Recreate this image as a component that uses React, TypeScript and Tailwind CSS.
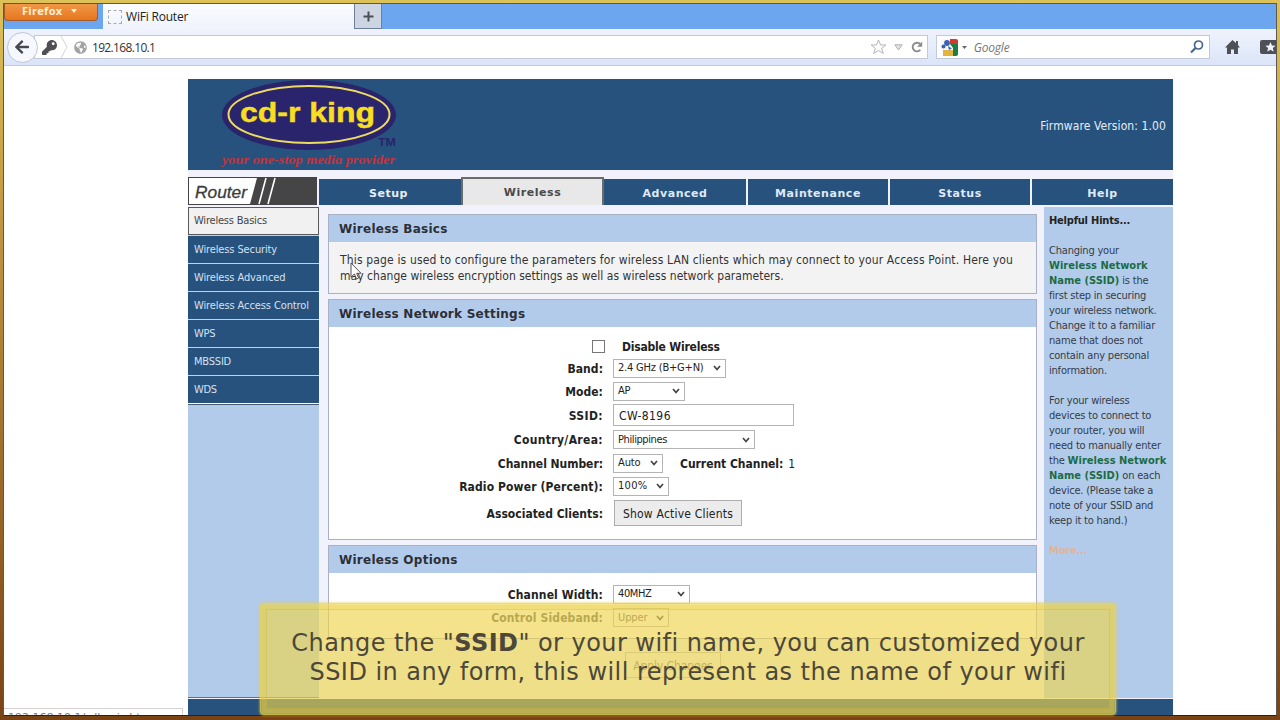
import { ReactNode } from 'react';
import { FaArrowLeft, FaKey, FaGlobeAmericas } from 'react-icons/fa';

interface NavItem {
  name: string;
  className: string;
}

const navItems: NavItem[] = [
  { name: 'Setup', className: 'w-[142px] pr-[3px] text-[#e8eef8]' },
  { name: 'Wireless', className: 'w-[143px] text-[#4a4a4a]' },
  { name: 'Advanced', className: 'w-[142px] text-[#dfe9f7]' },
  { name: 'Maintenance', className: 'w-[140px] ml-[2px] text-[#dfe9f7]' },
  { name: 'Status', className: 'w-[140px] ml-[2px] text-[#dfe9f7]' },
  { name: 'Help', className: 'w-[141px] ml-[2px] text-[#dfe9f7]' },
];

const sideItems: NavItem[] = [
  { name: 'Wireless Security', className: 'tracking-[-0.12px]' },
  { name: 'Wireless Advanced', className: 'tracking-[-0.12px]' },
  { name: 'Wireless Access Control', className: 'tracking-[-0.1px]' },
  { name: 'WPS', className: 'tracking-[-0.25px]' },
  { name: 'MBSSID', className: 'tracking-[-0.2px]' },
  { name: 'WDS', className: 'tracking-[-0.35px]' },
];

function Browser() {
  return (
    <div className="shrink-0 font-['Open_Sans','Noto_Sans',sans-serif]">
      <div className="h-[25px] flex bg-[#6ba6ee]">
        <div className="w-[94px] h-[17px] pl-[17px] pb-[2px] flex items-center gap-[9px] rounded-b-[4px] border border-t-0 border-[#a35a2c] bg-linear-to-b from-[#ef9746] to-[#e8761a] text-[11px] font-bold text-[#fff1dc]">
          <span className="tracking-[0.3px]">Firefox</span>
          <svg width="6" height="4" viewBox="0 0 6 4">
            <path d="M0 0h6L3 4z" fill="#fff1dc" />
          </svg>
        </div>
        <div className="ml-[5px] w-[251px] h-[25px] pl-[5px] flex items-center gap-[4px] bg-linear-to-b from-[#fbfcff] to-[#f0f3fd] text-[12px] text-[#222]">
          <span className="w-[14px] h-[14px] border border-dashed border-[#aaa]" />
          <span className="tracking-[-0.2px]">WiFi Router</span>
        </div>
        <div className="w-[28px] h-[25px] flex items-center justify-center border border-t-0 border-[#6d7f9c] bg-[#cdd5e2]">
          <svg width="11" height="11" viewBox="0 0 11 11">
            <path d="M5.5 0.5v10M0.5 5.5h10" stroke="#4b4f57" strokeWidth="2" />
          </svg>
        </div>
      </div>
      <div className="h-[37px] flex items-center bg-linear-to-b from-[#f0f3fd] to-[#dbe5f8] border-b border-[#c3cbdc]">
        <div className="ml-[3px] w-[31px] h-[31px] z-10 flex items-center justify-center rounded-full border border-[#bcc5da] bg-[#f6f8fe]">
          <FaArrowLeft className="text-[16px] text-[#45484f]" />
        </div>
        <div className="-ml-[4px] w-[896px] h-[24px] flex items-center bg-white border border-[#c2c9d8] text-[12px] text-[#333]">
          <FaKey className="ml-[7px] text-[15px] text-[#4e5055]" />
          <svg className="ml-[3px]" width="8" height="22" viewBox="0 0 8 22">
            <path d="M1 0l6 11-6 11" fill="none" stroke="#d2d5dc" />
          </svg>
          <FaGlobeAmericas className="ml-[6px] text-[13px] text-[#a3a3a3]" />
          <span className="ml-[5px] pt-px tracking-[-0.65px]">192.168.10.1</span>
          <svg className="ml-auto" width="17" height="16" viewBox="0 0 17 16">
            <path d="M8.5 1l2.1 5h5.2l-4.1 3.4 1.6 5.1-4.8-3-4.8 3 1.6-5.1L1.200 6h5.200z" fill="#fcfcfc" stroke="#b5b5b5" />
          </svg>
          <svg className="ml-[7px]" width="9" height="7" viewBox="0 0 9 7">
            <path d="M.8.8h7.400L4.500 6z" fill="#e4e4e4" stroke="#b0b0b0" />
          </svg>
          <svg className="ml-[8px] mr-[4px]" width="12" height="12" viewBox="0 0 12 12">
            <path d="M9.300 8.800A4.300 4.300 0 1 1 9.200 3.200" fill="none" stroke="#8c8c8c" strokeWidth="1.900" />
            <path d="M11.200.5v5.300H6z" fill="#8c8c8c" />
          </svg>
        </div>
        <div className="ml-[8px] w-[275px] h-[24px] pl-[4px] pr-[5px] flex items-center bg-white border border-[#c2c9d8]">
          <svg width="17" height="17" viewBox="0 0 17 17">
            <path d="M9 0h6q2 0 2 2v3H9z" fill="#d2392f" />
            <path d="M9 5h8v10q0 2-2 2h-3V9z" fill="#1b7f43" />
            <path d="M0 2q0-2 2-2h7v11H2q-2 0-2-2z" fill="#f5f8ff" />
            <path d="M2 11h10v6H2z" fill="#e3b341" />
            <circle cx="6" cy="4" r="2.900" fill="#3a63b8" />
            <circle cx="2.500" cy="7.500" r="2" fill="#3a63b8" />
            <path d="M7 7l4 2.500-3 1.500z" fill="#3a63b8" />
          </svg>
          <svg className="ml-[4px]" width="5" height="3" viewBox="0 0 5 3">
            <path d="M0 0h5L2.500 3z" fill="#666" />
          </svg>
          <span className="ml-[7px] pt-px text-[12px] italic tracking-[-0.2px] text-[#777]">Google</span>
          <svg className="ml-auto" width="14" height="14" viewBox="0 0 14 14">
            <circle cx="8.500" cy="5" r="4" fill="none" stroke="#44658d" strokeWidth="1.700" />
            <path d="M5.500 8L1 12.500" stroke="#44658d" strokeWidth="2.200" />
          </svg>
        </div>
        <svg className="ml-[15px]" width="15" height="14" viewBox="0 0 15 14">
          <path d="M7.500 0L11 3V1h2v4l2 2.500h-2V14H9V9.500H6V14H2V7.500H0z" fill="#4d5057" />
        </svg>
        <svg className="ml-[20px]" width="16" height="14" viewBox="0 0 16 14">
          <rect width="20" height="14" rx="2" fill="#4d5057" />
          <path d="M10.500 2l1.500 3.400 3.600.3-2.700 2.400.8 3.600-3.200-1.900-3.200 1.900.8-3.600-2.700-2.400 3.600-.3z" fill="#eef2fb" />
        </svg>
      </div>
    </div>
  );
}

function Header() {
  return (
    <div className="h-[91px] pr-[7px] flex items-center justify-between bg-[#27527d] text-[12px] text-[#e6edf6]">
      <svg width="230" height="91" viewBox="0 0 230 91">
        <ellipse cx="121" cy="36" rx="87" ry="35" fill="#29246b" />
        <ellipse cx="121" cy="35.500" rx="80.500" ry="28.500" fill="none" stroke="#eedb62" strokeWidth="2" />
        <text
          x="52"
          y="43"
          textLength="135"
          lengthAdjust="spacingAndGlyphs"
          fontSize="28"
          fontWeight="bold"
          fill="#f7de1e"
          stroke="#f7de1e"
          strokeWidth=".5"
          className="font-['Liberation_Sans',Arial,sans-serif]"
        >
          cd-r king
        </text>
        <text
          x="190"
          y="67"
          textLength="18"
          lengthAdjust="spacingAndGlyphs"
          fontSize="10"
          fontWeight="bold"
          fill="#29246b"
          className="font-['Liberation_Sans',Arial,sans-serif]"
        >
          TM
        </text>
        <text
          x="34"
          y="85"
          textLength="173"
          lengthAdjust="spacingAndGlyphs"
          fontSize="12"
          fontWeight="bold"
          fontStyle="italic"
          fill="#c8323c"
          className="font-['Liberation_Serif',serif]"
        >
          your one-stop media provider
        </text>
      </svg>
      <span className="pt-[2px] font-['DejaVu_Sans_Condensed','DejaVu_Sans',sans-serif] tracking-[0.1px]">Firmware Version: 1.00</span>
    </div>
  );
}

function Nav() {
  return (
    <nav className="h-[28px] flex items-end">
      <svg className="mr-[2px]" width="129" height="28" viewBox="0 0 129 28">
        <rect x=".5" y=".5" width="128" height="27" fill="#fff" stroke="#444" />
        <path d="M69 1h59v26H62z" fill="#454545" />
        <path d="M78 1l-7 26M87 1l-7 26" stroke="#fff" strokeWidth="1.600" />
        <text
          x="7"
          y="21"
          textLength="52"
          lengthAdjust="spacingAndGlyphs"
          fontSize="17"
          fontStyle="italic"
          fill="#3c3c3c"
          stroke="#3c3c3c"
          strokeWidth=".3"
          className="font-['Liberation_Sans',Arial,sans-serif]"
        >
          Router
        </text>
      </svg>
      {navItems.map(({ name, className }) => (
        <div
          key={name}
          className={`${className} flex items-center justify-center text-[11px] font-bold tracking-[0.55px] ${
            name === 'Wireless' ? 'h-[28px] pt-[2px] bg-[#e8e8e8] border-2 border-b-0 border-[#6c6c6c]' : 'h-[26px] pt-[5px]  bg-[#27527d]'
          }`}
        >
          {name}
        </div>
      ))}
    </nav>
  );
}

function Sidebar() {
  return (
    <div className="w-[131px] flex flex-col bg-[#b3cbea] border-b border-[#5b708e] font-['DejaVu_Sans_Condensed','DejaVu_Sans',sans-serif] text-[11px]">
      <div className="h-[28px] pl-[5px] pt-px flex items-center bg-[#f1f1f1] border border-[#5a5a5a] text-[#444] tracking-[-0.2px]">
        Wireless Basics
      </div>
      {sideItems.map(({ name, className }) => (
        <div
          key={name}
          className={`${className} h-[28px] pl-[6px] pt-px flex items-center bg-[#27527d] border-t border-[#c8d0dc] text-[#d3e1f3]`}
        >
          {name}
        </div>
      ))}
      <div className="h-[2px] border-t border-white bg-[#4b5c70]" />
    </div>
  );
}

function Panel({ title, className, children }: { title: string; className: string; children: ReactNode }) {
  return (
    <section className={`${className} border border-[#a9b1c6]`}>
      <h2 className="h-[27px] pl-[10px] flex items-center bg-[#b3cbea] font-['DejaVu_Sans',Verdana,sans-serif] text-[12px] font-bold tracking-[0.25px] text-[#2c2f36]">
        {title}
      </h2>
      {children}
    </section>
  );
}

function Row({ label, className, children }: { label: string; className: string; children: ReactNode }) {
  return (
    <div className={`${className} flex items-center`}>
      <span className="w-[274px] mr-[10px] pt-px text-right font-bold">{label}</span>
      {children}
    </div>
  );
}

function Select({ value, className }: { value: string; className: string }) {
  return (
    <div className={`${className} h-[19px] pl-[4px] pr-[4px] flex items-center justify-between bg-white border border-[#b4b4b4] text-[11px] whitespace-nowrap`}>
      <span className="pt-px">{value}</span>
      <svg width="8" height="6" viewBox="0 0 8 6">
        <path d="M1 1l3 3.500L7 1" fill="none" stroke="#444" strokeWidth="1.700" />
      </svg>
    </div>
  );
}

function Content() {
  return (
    <main className="w-[725px] pl-[9px] pr-[7px] pt-[7px] bg-[#f1f2fb] font-['DejaVu_Sans_Condensed','DejaVu_Sans',sans-serif] text-[12px] text-[#222]">
      <Panel title="Wireless Basics" className="h-[80px] bg-[#f3f3f4]">
        <p className="pl-[11px] pt-[10px] leading-[16px] text-[#333] whitespace-nowrap">
          <span className="tracking-[0.15px]">
            This page is used to configure the parameters for wireless LAN clients which may connect to your Access Point. Here you
          </span>
          <br />
          <span className="tracking-[0.03px]">
            may change wireless encryption settings as well as wireless network parameters.
          </span>
        </p>
      </Panel>
      <Panel title="Wireless Network Settings" className="mt-[5px] h-[241px] bg-white">
        <div className="mt-[8px] h-[22px] flex items-center">
          <span className="ml-[263px] w-[13px] h-[13px] bg-white border border-[#777]" />
          <span className="ml-[17px] pt-px font-bold tracking-[-0.2px]">Disable Wireless</span>
        </div>
        <Row label="Band:" className="h-[22px] tracking-[0.05px]">
          <Select value="2.4 GHz (B+G+N)" className="w-[113px] tracking-[-0.2px]" />
        </Row>
        <Row label="Mode:" className="h-[24px] tracking-[0.05px]">
          <Select value="AP" className="w-[72px] tracking-[-0.3px]" />
        </Row>
        <Row label="SSID:" className="h-[24px] tracking-[0.4px]">
          <div className="w-[181px] h-[22px] pl-[5px] pt-px flex items-center border border-[#b4b4b4]">CW-8196</div>
        </Row>
        <Row label="Country/Area:" className="h-[25px] tracking-[0.35px]">
          <Select value="Philippines" className="w-[142px] tracking-[-0.4px]" />
        </Row>
        <Row label="Channel Number:" className="h-[22px] tracking-[-0.03px]">
          <Select value="Auto" className="w-[50px] tracking-[-0.1px]" />
          <span className="ml-[17px] pt-px font-bold">Current Channel:</span>
          <span className="ml-[5px] pt-px">1</span>
        </Row>
        <Row label="Radio Power (Percent):" className="h-[24px] tracking-[0.12px]">
          <Select value="100%" className="w-[56px] tracking-[0.3px]" />
        </Row>
        <Row label="Associated Clients:" className="h-[30px] tracking-[0.01px]">
          <div className="ml-px w-[128px] h-[26px] pt-px flex items-center justify-center bg-[#ececec] border border-[#adadad] tracking-[0.2px]">
            Show Active Clients
          </div>
        </Row>
      </Panel>
      <Panel title="Wireless Options" className="mt-[5px] h-[94px] bg-white">
        <Row label="Channel Width:" className="mt-[9px] h-[24px] tracking-[0.12px]">
          <Select value="40MHZ" className="w-[77px] tracking-[-0.4px]" />
        </Row>
        <Row label="Control Sideband:" className="h-[23px] tracking-[0.13px] text-[#555]">
          <Select value="Upper" className="w-[56px] tracking-[-0.1px]" />
        </Row>
      </Panel>
      <div className="mt-[13px] ml-[297px] w-[96px] h-[26px] pt-px flex items-center justify-center border border-[#bbb] tracking-[-0.1px] text-[#777]">
        Apply Changes
      </div>
    </main>
  );
}

function Hints() {
  return (
    <aside className="w-[129px] pl-[5px] pt-[6px] bg-[#b3cbea] font-['DejaVu_Sans_Condensed','DejaVu_Sans',sans-serif] text-[11px] leading-[15px] tracking-[-0.2px] text-[#333c48] whitespace-nowrap [&_b]:text-[#1c6b45] [&_b]:tracking-[0.02px]">
      <h3 className="font-bold text-[#222]">Helpful Hints...</h3>
      <p className="mt-[15px]">
        Changing your
        <br />
        <b>Wireless Network</b>
        <br />
        <b>Name (SSID)</b> is the
        <br />
        first step in securing
        <br />
        your wireless network.
        <br />
        Change it to a familiar
        <br />
        name that does not
        <br />
        contain any personal
        <br />
        information.
      </p>
      <p className="mt-[15px]">
        For your wireless
        <br />
        devices to connect to
        <br />
        your router, you will
        <br />
        need to manually enter
        <br />
        the <b>Wireless Network</b>
        <br />
        <b>Name (SSID)</b> on each
        <br />
        device. (Please take a
        <br />
        note of your SSID and
        <br />
        keep it to hand.)
      </p>
      <p className="mt-[15px] font-bold text-[#e0b49c]">More...</p>
    </aside>
  );
}

export default function App() {
  return (
    <div className="relative w-[1280px] h-[720px] overflow-hidden pt-[3px] px-[3px] pb-[4px] bg-linear-to-b from-[#dcc258] via-[#b98a3c] via-40% to-[#7a4314] font-['DejaVu_Sans',Verdana,sans-serif]">
      <div className="h-[713px] flex flex-col overflow-hidden bg-white border border-[#5c5a50] border-b-[#2c2118]">
        <Browser />
        <div className="mt-[13px] ml-[184px] w-[985px] flex-1 min-h-0 flex flex-col bg-[#f1f2fb]">
          <Header />
          <div className="mt-[7px]">
            <Nav />
          </div>
          <div className="mt-[2px] h-[491px] shrink-0 flex">
            <Sidebar />
            <Content />
            <Hints />
          </div>
          <div className="mt-px h-[17px] shrink-0 bg-[#27527d]" />
        </div>
      </div>

      {/* top of the status bubble, cut off by the window edge */}
      <div className="absolute left-[4px] top-[708px] w-[179px] h-[7px] overflow-hidden border-t border-r border-[#d8d0d0] bg-white pl-[4px] text-[11px] leading-[17px] text-[#777]">
        192.168.10.1/wlbasic.htm
      </div>

      <svg className="absolute left-[350px] top-[262px]" width="13" height="19" viewBox="0 0 13 19">
        <path d="M1 1v14l3.400-3 2.200 5 2-1-2-4.700H11z" fill="#fff" stroke="#555" strokeWidth="1" />
      </svg>

      <div className="absolute left-[260px] top-[603px] w-[856px] h-[112px] p-[5px] rounded-[4px] bg-[#eed44b]/65 border border-[#ecd04a]/40 shadow-[0_0_3px_#e4cc4c]">
        <div className="h-full pt-[19px] border border-[#d0b63a]/40 shadow-[0_0_0_4px_#ecd03c40] text-center text-[24px] leading-[29px] tracking-[0.45px] text-[#4d473a] whitespace-nowrap">
          Change the "<b>SSID</b>" or your wifi name, you can customized your
          <br />
          SSID in any form, this will represent as the name of your wifi
        </div>
      </div>
    </div>
  );
}
